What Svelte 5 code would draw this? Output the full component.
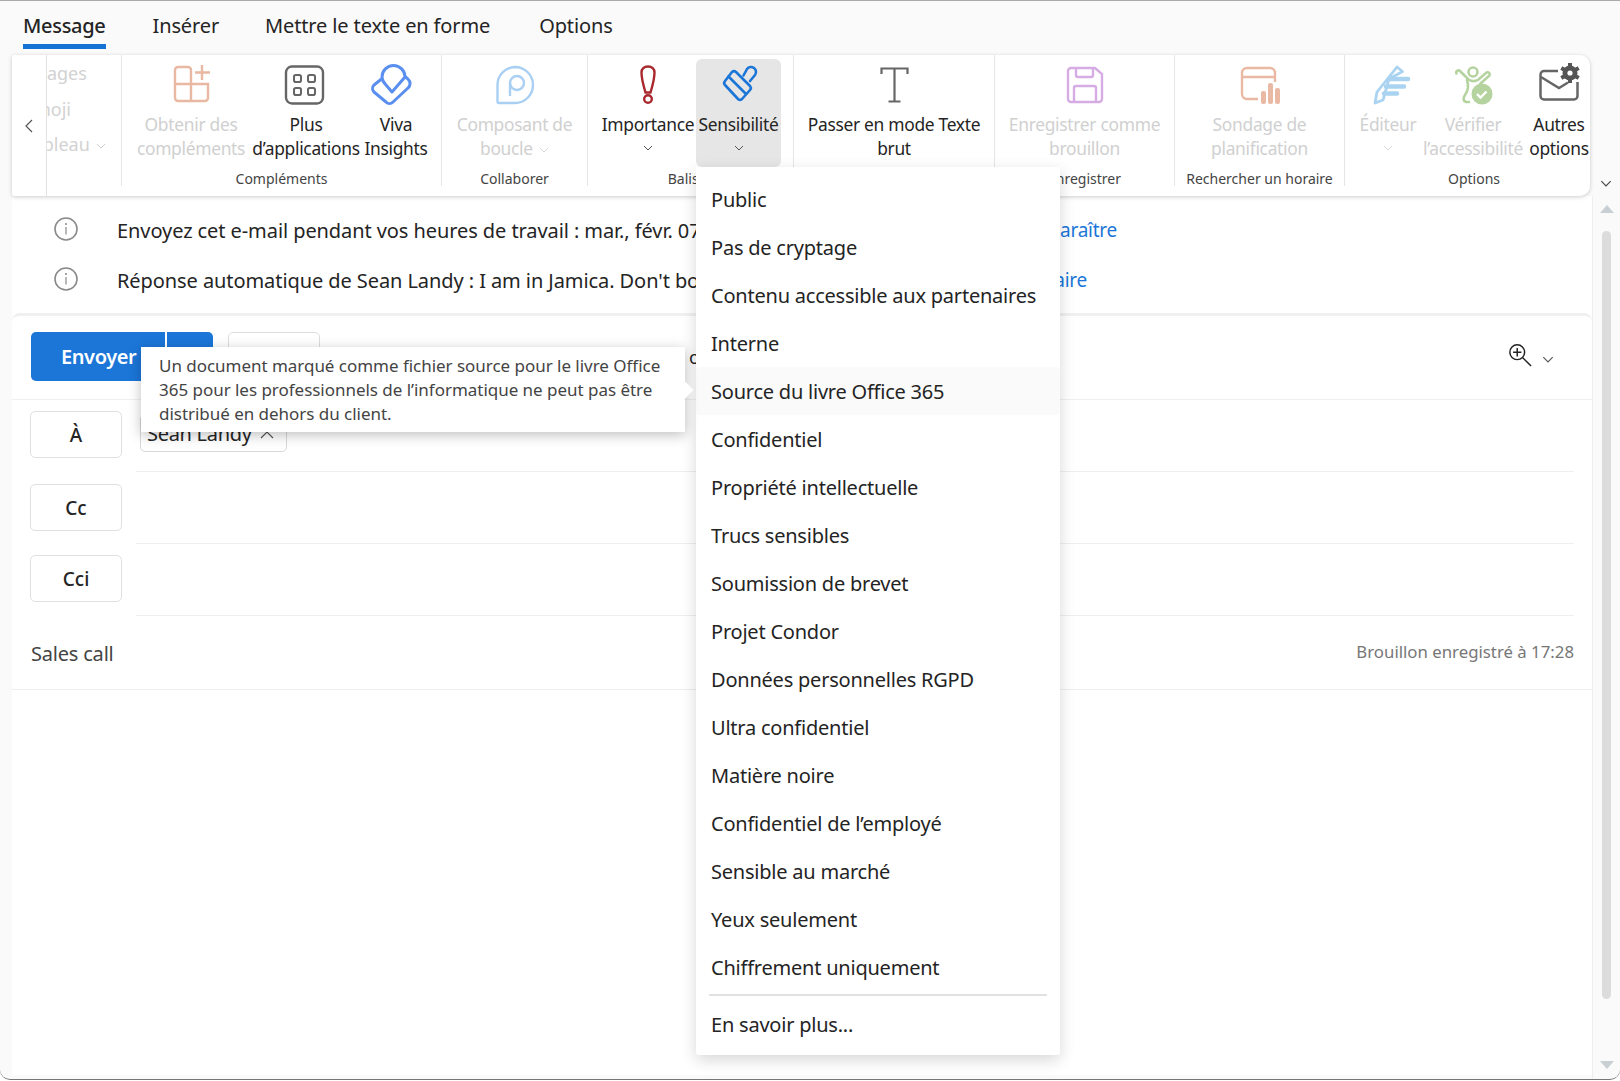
<script>
  const menu = ['Public','Pas de cryptage','Contenu accessible aux partenaires','Interne','Source du livre Office 365','Confidentiel','Propriété intellectuelle','Trucs sensibles','Soumission de brevet','Projet Condor','Données personnelles RGPD','Ultra confidentiel','Matière noire','Confidentiel de l’employé','Sensible au marché','Yeux seulement','Chiffrement uniquement'];
  const tabs = ['Message','Insérer','Mettre le texte en forme','Options'];
</script>

{#snippet chev(cls)}
  <svg class="chev {cls}" viewBox="0 0 10 6" width="10" height="6"><path d="M1 1l4 4 4-4" fill="none" stroke="currentColor" stroke-width="1"/></svg>
{/snippet}

{#snippet info()}
  <svg class="info-ic" viewBox="0 0 26 26" width="26" height="26"><circle cx="13" cy="13" r="11" fill="none" stroke="#8a8a8a" stroke-width="1.6"/><rect x="12.4" y="11" width="1.2" height="7.5" fill="#8a8a8a"/><circle cx="13" cy="8" r="1" fill="#8a8a8a"/></svg>
{/snippet}

<div class="page">
  <div class="window">
    <nav class="tabs">
      {#each tabs as t, i}
        <span class="tab" class:active={i === 0}>{t}</span>
      {/each}
    </nav>

    <div class="ribbon-row">
      <div class="ribbon">
        <div class="back">
          <svg viewBox="0 0 10 16" width="10" height="16"><path d="M8 2L2 8l6 6" fill="none" stroke="#555" stroke-width="1.2"/></svg>
        </div>
        <div class="group clipped">
          <div class="clip-list">
            <span>Images</span><span>Emoji</span><span>Tableau {@render chev('inline')}</span>
          </div>
        </div>

        <section class="group g-comp">
          <div class="items">
            <div class="item off w-obt">
              <svg viewBox="0 0 40 40" width="40" height="40"><g fill="none" stroke="#e9b8a2" stroke-width="2.4"><path d="M20 19V5a3 3 0 0 0-3-3H7a3 3 0 0 0-3 3v28a3 3 0 0 0 3 3h27a3 3 0 0 0 3-3V19H4M20 19v17"/><path d="M31 0v15M24 7.500h15"/></g></svg>
              <span>Obtenir des<br>compléments</span>
            </div>
            <div class="item w-plus">
              <svg class="plus-ic" viewBox="0 0 40 40" width="40" height="40"><g fill="none" stroke="#666"><rect x="2" y="1.500" width="37" height="37" rx="6" stroke-width="2.400"/><rect x="10" y="10" width="7" height="7" rx="1.800" stroke-width="2"/><rect x="24" y="10" width="7" height="7" rx="1.800" stroke-width="2"/><rect x="10" y="23" width="7" height="7" rx="1.800" stroke-width="2"/><rect x="24" y="23" width="7" height="7" rx="1.800" stroke-width="2"/></g></svg>
              <span>Plus<br>d’applications</span>
            </div>
            <div class="item w-viva">
              <svg class="viva" viewBox="0 0 42 40" width="42" height="40"><g fill="none" stroke="#5a8ff0" stroke-width="3" stroke-linejoin="round"><path d="M11.500 14L4 20a5 5 0 0 0 0 7l12 10a5 5 0 0 0 7 0l15-14a6 6 0 0 0 0-9l-3.500-3"/><path d="M12 12a11.500 11.500 0 0 1 23 0L22 27l-6-7c-2-2-4-4-4-8z"/></g></svg>
              <span>Viva<br>Insights</span>
            </div>
          </div>
          <div class="label">Compléments</div>
        </section>

        <section class="group g-coll">
          <div class="items">
            <div class="item off w-full">
              <svg viewBox="0 0 40 40" width="40" height="40"><g fill="none" stroke="#a9d0f3" stroke-width="2.400"><path d="M20 2a18 18 0 0 1 0 36H4a1.500 1.500 0 0 1-1.500-1.500V20A18 18 0 0 1 20 2z"/><circle cx="22" cy="18" r="7"/><path d="M15 18v13"/></g></svg>
              <span>Composant de<br>boucle {@render chev('inline')}</span>
            </div>
          </div>
          <div class="label">Collaborer</div>
        </section>

        <section class="group g-bal">
          <div class="items">
            <div class="item w-imp">
              <svg viewBox="0 0 40 40" width="40" height="40"><g fill="none" stroke="#a8282e" stroke-width="2.400"><path d="M20 1.500c-4 0-6.500 2.500-6.500 6 0 6 2.500 15 4 20h5c1.500-5 4-14 4-20 0-3.500-2.500-6-6.500-6z"/><circle cx="20" cy="34" r="3.800"/></g></svg>
              <span>Importance</span>
              {@render chev('under')}
            </div>
            <div class="item w-sen selected">
              <svg viewBox="0 0 40 40" width="40" height="40"><g fill="none" stroke="#1b76d8" stroke-width="2.600" stroke-linejoin="round" stroke-linecap="round"><path d="M13 7a3 3 0 0 1 4 0l14 14a3 3 0 0 1 0 4l-8 9a3 3 0 0 1-4 0L6 20a3 3 0 0 1 0-4z"/><path d="M9.500 11.500L27 29"/><path d="M24.500 10.500L28 4a5 5 0 0 1 8 6l-5 6"/></g></svg>
              <span>Sensibilité</span>
              {@render chev('under')}
            </div>
          </div>
          <div class="label">Balises</div>
        </section>

        <section class="group g-txt">
          <div class="items">
            <div class="item w-full">
              <svg viewBox="0 0 40 40" width="40" height="40"><g fill="none" stroke="#666" stroke-width="2.200"><path d="M7.500 9V3.500h26V9"/><path d="M20.500 3.500v33"/><path d="M14.500 36.500h12"/></g></svg>
              <span>Passer en mode Texte<br>brut</span>
            </div>
          </div>
        </section>

        <section class="group g-enr">
          <div class="items">
            <div class="item off w-full">
              <svg viewBox="0 0 40 40" width="40" height="40"><g fill="none" stroke="#d5ace3" stroke-width="2.400"><path d="M6 3h24l7 6v25a3 3 0 0 1-3 3H6a3 3 0 0 1-3-3V6a3 3 0 0 1 3-3z"/><path d="M11 3v7a2 2 0 0 0 2 2h13a2 2 0 0 0 2-2V3"/><path d="M9 37V23a2 2 0 0 1 2-2h18a2 2 0 0 1 2 2v14"/></g></svg>
              <span>Enregistrer comme<br>brouillon</span>
            </div>
          </div>
          <div class="label">Enregistrer</div>
        </section>

        <section class="group g-rec">
          <div class="items">
            <div class="item off w-full">
              <svg viewBox="0 0 42 40" width="42" height="40"><g fill="none" stroke="#eab9a3" stroke-width="2.400"><path d="M19 34H8a5 5 0 0 1-5-5V8a5 5 0 0 1 5-5h23a5 5 0 0 1 5 5v9"/><path d="M3 12h33"/></g><g fill="#eab9a3"><rect x="22" y="26" width="5" height="13" rx="2"/><rect x="29" y="18" width="5" height="21" rx="2"/><rect x="36" y="23" width="5" height="16" rx="2"/></g></svg>
              <span>Sondage de<br>planification</span>
            </div>
          </div>
          <div class="label">Rechercher un horaire</div>
        </section>

        <section class="group g-opt">
          <div class="items">
            <div class="item off w-edi">
              <svg viewBox="0 0 40 40" width="40" height="40"><g fill="none" stroke="#a9d3f0" stroke-linecap="round" stroke-linejoin="round"><path d="M7 38l2-11L29 2l5.500 4.500L21 14 15 35z" stroke-width="2.800"/><path d="M21 14h19M18 21.500h18M16 28.500h13" stroke-width="4.500"/></g></svg>
              <span>Éditeur</span>
              {@render chev('under')}
            </div>
            <div class="item off w-ver">
              <svg viewBox="0 0 40 40" width="40" height="40"><g fill="none" stroke="#b5d39f" stroke-width="2.600" stroke-linecap="round"><circle cx="20" cy="7" r="4.500"/><path d="M3.500 8.500c-1-3 2-4 4-2l8 8c3 2 7 2 10 0l8-7c2-1 4 1 3 3l-9 8-2 4"/><path d="M14 15c2 6 1 11-2 15-2 3-2 6 1 7h3"/></g><circle cx="29" cy="29" r="10.500" fill="#b5d39f"/><path d="M24 29l3.500 3.500 6-6" fill="none" stroke="#fff" stroke-width="2.400"/></svg>
              <span>Vérifier<br>l’accessibilité</span>
            </div>
            <div class="item w-aut">
              <svg viewBox="0 0 40 40" width="40" height="40"><g fill="none" stroke="#666" stroke-width="2.500"><path d="M19 6H5a3.500 3.500 0 0 0-3.500 3.500V31A3.500 3.500 0 0 0 5 34.500h30a3.500 3.500 0 0 0 3.500-3.500V17"/><path d="M2 12l18 11 9-5.500"/></g><circle cx="31" cy="8" r="7.500" fill="#555"/><g stroke="#555" stroke-width="4"><path d="M31-2v20M22.300 3l17.400 10M22.300 13l17.400-10"/></g><circle cx="31" cy="8" r="2.600" fill="#fff"/></svg>
              <span>Autres<br>options</span>
            </div>
          </div>
          <div class="label">Options</div>
        </section>
      </div>
      {@render chev('more')}
    </div>

    <div class="content">
      <main class="main">
        <div class="infos">
          <div class="info">
            {@render info()}
            <div class="info-body b1"><span>Envoyez cet e-mail pendant vos heures de travail : mar., févr. 07</span><a href="#top">Faire disparaître</a></div>
          </div>
          <div class="info">
            {@render info()}
            <div class="info-body b2"><span>Réponse automatique de Sean Landy : I am in Jamica. Don't bother</span><a href="#top">Commentaire</a></div>
          </div>
        </div>

        <div class="compose">
          <div class="toolbar">
            <div class="send"><span class="send-l">Envoyer</span><span class="send-r"></span></div>
            <div class="discard"></div>
            <span class="from">o</span>
            <div class="zoom">
              <svg viewBox="0 0 26 26" width="24" height="24"><circle cx="10" cy="10" r="8" fill="none" stroke="#222" stroke-width="1.600"/><path d="M10 5.500v9M5.500 10h9" stroke="#222" stroke-width="1.600"/><path d="M16 16l9 9" stroke="#222" stroke-width="1.600"/></svg>
              {@render chev('zoomchev')}
            </div>
          </div>

          <div class="addr">
            <button class="ab to">À</button>
            <div class="field"><span class="chip">Sean Landy <svg viewBox="0 0 14 8" width="14" height="8"><path d="M1 7l6-6 6 6" fill="none" stroke="#555" stroke-width="1.100"/></svg></span></div>
          </div>
          <div class="addr">
            <button class="ab">Cc</button>
            <div class="field"></div>
          </div>
          <div class="addr">
            <button class="ab to">Cci</button>
            <div class="field"></div>
          </div>

          <div class="subject">
            <span>Sales call</span>
            <span class="saved">Brouillon enregistré à 17:28</span>
          </div>
        </div>
      </main>
      <aside class="scroll">
        <svg class="sc-up" viewBox="0 0 14 8" width="14" height="8"><path d="M0 8l7-8 7 8z" fill="#c9d0d3"/></svg>
        <div class="thumb"></div>
        <svg class="sc-down" viewBox="0 0 14 8" width="14" height="8"><path d="M0 0l7 8 7-8z" fill="#c9d0d3"/></svg>
      </aside>
    </div>
  </div>

  <div class="tooltip">
    Un document marqué comme fichier source pour le livre Office<br>365 pour les professionnels de l’informatique ne peut pas être<br>distribué en dehors du client.
    <i class="arrow"></i>
  </div>

  <div class="menu">
    {#each menu as m, i}
      <div class="mi" class:hover={i === 4}>{m}</div>
    {/each}
    <div class="sep"></div>
    <div class="mi last">En savoir plus...</div>
  </div>
</div>

<style>
  :global(body) { margin: 0; background: #fff; }
  .page {
    position: relative; width: 1620px; height: 1081px; overflow: hidden;
    background: #fff; font-family: "Noto Sans", "Open Sans", sans-serif; color: #242424;
  }
  .window {
    display: flex; flex-direction: column; width: 1620px; height: 1080px; box-sizing: border-box;
    background: #fafafa; border-top: 1px solid #aaa; border-bottom: 1px solid #777;
    border-radius: 0 0 10px 10px; overflow: hidden;
  }
  .tabs { display: flex; height: 54px; padding-left: 23px; box-sizing: border-box; flex: none; }
  .tab { font-size: 20px; line-height: 26px; padding-top: 12px; margin-right: 46px; height: 26px; letter-spacing: -.13px; }
  .tab:nth-child(3) { margin-right: 49px; }
  .tab.active { font-weight: 500; letter-spacing: -.3px; border-bottom: 5px solid #1673d6; margin-right: 47px; padding-bottom: 5px; }

  .ribbon-row { display: flex; flex: none; height: 141px; padding-left: 12px; position: relative; z-index: 1; }
  .ribbon {
    display: flex; width: 1578px; height: 141px; background: #fff; border-radius: 2px 10px 10px 2px;
    box-shadow: 0 1px 4px rgba(0,0,0,.2);
  }
  .back { width: 34px; flex: none; display: flex; align-items: center; justify-content: center; border-right: 1px solid #e2e2e2; }
  .group { position: relative; height: 131px; border-right: 1px solid #e6e6e6; flex: none; box-sizing: border-box; }
  .group:last-child { border-right: 0; }
  .clipped { width: 75px; overflow: hidden; color: #d2d2d2; }
  .clip-list { display: flex; flex-direction: column; margin-left: -23px; padding-top: 1px; font-size: 18px; line-height: 35.500px; white-space: nowrap; }
  .g-comp { width: 320px; padding-left: 9px; }
  .g-coll { width: 146px; }
  .g-bal { width: 206px; padding-left: 13px; }
  .g-txt { width: 201px; }
  .g-enr { width: 180px; }
  .g-rec { width: 170px; }
  .g-opt { width: 246px; padding-left: 6px; }
  .g-opt .label { padding-left: 12px; }
  .items { display: flex; height: 112px; }
  .item { display: flex; flex-direction: column; align-items: center; flex: none; font-size: 17.4px; letter-spacing: -.3px; line-height: 24px; text-align: center; white-space: nowrap; padding-top: 10px; box-sizing: border-box; height: 112px; }
  .item svg:not(.chev) { flex: none; height: 40px; margin-bottom: 7px; overflow: visible; }
  .item.off { color: #d0d0d0; }
  .item.off .chev { color: #d8d8d8; }
  .w-full { width: 100%; }
  .w-obt { width: 120px; }
  .w-plus { width: 110px; }
  .plus-ic { margin-left: -4px; }
  .w-viva { width: 70px; }
  .viva { margin-left: -10px; }
  .w-imp { width: 94px; }
  .w-sen { width: 85px; margin-left: 1px; margin-top: 4px; padding-top: 6px; height: 108px; }
  .selected { background: #e6e6e6; border-radius: 6px; }
  .w-edi { width: 74px; }
  .w-ver { width: 96px; }
  .w-aut { width: 64px; margin-left: 6px; }
  .chev { color: #555; display: block; }
  .chev.under { margin-top: 9px; }
  .chev.inline { display: inline-block; vertical-align: 2px; color: #d0d0d0; margin-left: 2px; }
  .chev.more { align-self: flex-end; margin: 0 0 9px 10px; color: #444; width: 12px; height: 7px; }
  .label { position: absolute; left: 0; right: 0; top: 113px; text-align: center; font-size: 14px; line-height: 22px; color: #444; white-space: nowrap; }

  .content { display: flex; flex: 1; min-height: 0; }
  .main { width: 1580px; margin-left: 12px; flex: none; display: flex; flex-direction: column; margin-bottom: 4px; background: #fff; }
  .infos { height: 117px; flex: none; box-sizing: border-box; padding-top: 9px; }
  .info { display: flex; align-items: center; height: 50px; padding-left: 41px; font-size: 20px; }
  .info-ic { margin-right: 38px; flex: none; margin-top: -2px; }
  .info-body { display: flex; justify-content: space-between; white-space: nowrap; letter-spacing: -.08px; }
  .b1 { width: 1000px; }
  .b2 { width: 970px; }
  .info-body span { overflow: hidden; max-width: 600px; }
  a { color: #1b76d8; text-decoration: none; font-size: 19px; letter-spacing: -.25px; }

  .compose { flex: 1; border-top: 3px solid #f0f0f0; border-radius: 8px 8px 0 0; display: flex; flex-direction: column; }
  .toolbar { height: 84px; flex: none; box-sizing: border-box; padding: 16px 0 0 19px; display: flex; border-bottom: 1px solid #f0f0f0; }
  .send { display: flex; height: 49px; border-radius: 5px; overflow: hidden; color: #fff; font-size: 20px; font-weight: 600; letter-spacing: -.4px; line-height: 50px; flex: none; }
  .send-l { width: 134px; background: #1b76d8; padding-left: 30px; box-sizing: border-box; }
  .send-r { width: 46px; margin-left: 2px; background: #1b76d8; }
  .discard { width: 92px; height: 40px; border: 1px solid #ddd; border-radius: 5px; margin-left: 15px; box-sizing: border-box; flex: none; }
  .from { margin-left: 369px; font-size: 18px; line-height: 50px; flex: none; }
  .zoom { margin-left: auto; margin-right: 38px; display: flex; align-items: flex-start; padding-top: 11px; }
  .chev.zoomchev { margin: 13px 0 0 10px; width: 12px; height: 7px; }

  .addr { display: flex; height: 72px; padding-left: 18px; flex: none; }
  .ab { width: 92px; height: 47px; margin: 12px 0 0 0; background: #fff; border: 1px solid #e0e0e0; border-radius: 5px; font: 500 19px "Noto Sans", sans-serif; color: #242424; padding: 0; flex: none; }
  .ab.to { margin-top: 11px; }
  .field { flex: none; width: 1438px; margin-left: 14px; height: 72px; box-sizing: border-box; border-bottom: 1px solid #eee; padding: 14px 0 0 4px; margin-right: 18px; }
  .chip { display: inline-flex; align-items: center; gap: 8px; height: 38px; padding: 0 9px 0 6px; border: 1px solid #d8d8d8; border-radius: 5px; font-size: 20px; box-sizing: border-box; width: 147px; white-space: nowrap; letter-spacing: -.3px; }
  .chip svg { margin-top: 3px; flex: none; }
  .subject { height: 74px; flex: none; box-sizing: border-box; border-bottom: 1px solid #eee; display: flex; justify-content: space-between; padding: 2px 18px 0 19px; align-items: center; font-size: 20px; color: #444; letter-spacing: -.2px; }
  .saved { font-size: 16.800px; color: #777; margin-top: -4px; letter-spacing: 0; }

  .scroll { flex: 1; position: relative; border-left: 1px solid #eee; display: flex; flex-direction: column; align-items: center; }
  .sc-up { margin-top: 9px; }
  .thumb { width: 9px; height: 768px; margin-top: 18px; background: #dcdcdc; border-radius: 5px; }
  .sc-down { margin-top: auto; margin-bottom: 10px; }

  .tooltip {
    position: absolute; left: 141px; top: 347px; width: 544px; height: 85px; box-sizing: border-box;
    padding: 7px 0 0 18px; background: #fff; font-size: 17px; line-height: 24px; color: #444; white-space: nowrap;
    box-shadow: 0 3px 12px rgba(0,0,0,.25); z-index: 3; letter-spacing: -.03px;
  }
  .arrow { position: absolute; right: -6px; top: 37px; width: 12px; height: 12px; background: #fff; transform: rotate(45deg); }
  .menu {
    position: absolute; left: 696px; top: 167px; width: 364px; height: 888px; background: #fff; box-sizing: border-box;
    padding-top: 8px; box-shadow: 0 5px 16px rgba(0,0,0,.16); z-index: 2; border-radius: 0 0 3px 3px;
  }
  .mi { height: 48px; line-height: 50px; padding-left: 15px; font-size: 20px; letter-spacing: -.22px; white-space: nowrap; }
  .mi.hover { background: #fafafa; border-radius: 4px; }
  .sep { height: 2px; margin: 3px 13px 0 13px; background: #e1e1e1; }
  .mi.last { margin-top: 4px; }
</style>
